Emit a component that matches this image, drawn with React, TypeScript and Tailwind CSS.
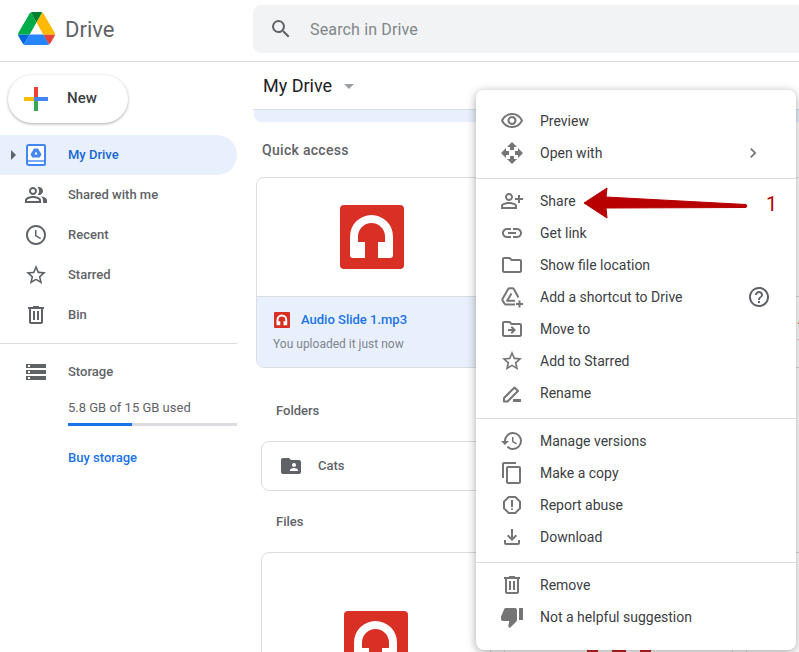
import type { ReactNode } from 'react';
import {
  MdArrowDropDown,
  MdChevronRight,
  MdContentCopy,
  MdFolderShared,
  MdHelpOutline,
  MdLink,
  MdOpenWith,
  MdOutlineAccessTime,
  MdOutlineDriveFileMove,
  MdOutlineFileDownload,
  MdOutlineFolder,
  MdOutlineHistory,
  MdOutlinePeopleAlt,
  MdOutlinePersonAddAlt,
  MdOutlineReportGmailerrorred,
  MdOutlineVisibility,
  MdSearch,
  MdStarBorder,
  MdStorage,
  MdThumbDown,
} from 'react-icons/md';

const DriveLogo = () => (
  <svg width="37" height="33" viewBox="0 0 87.3 78" className="mb-[2px]">
    <path d="m6.6 66.85 3.85 6.65c.8 1.4 1.95 2.5 3.3 3.3l13.75-23.8h-27.5c0 1.55.4 3.1 1.2 4.5z" fill="#0066da" />
    <path d="m43.65 25-13.75-23.8c-1.35.8-2.5 1.9-3.3 3.3l-25.4 44a9.06 9.06 0 0 0 -1.2 4.5h27.5z" fill="#00ac47" />
    <path d="m73.55 76.8c1.35-.8 2.5-1.9 3.3-3.3l1.6-2.75 7.65-13.25c.8-1.4 1.2-2.95 1.2-4.5h-27.502l5.852 11.5z" fill="#ea4335" />
    <path d="m43.65 25 13.75-23.8c-1.35-.8-2.9-1.2-4.5-1.2h-18.5c-1.6 0-3.15.45-4.5 1.2z" fill="#00832d" />
    <path d="m59.8 53h-32.3l-13.75 23.8c1.35.8 2.9 1.2 4.5 1.2h50.8c1.6 0 3.15-.45 4.5-1.2z" fill="#2684fc" />
    <path d="m73.4 26.5-12.7-22c-.8-1.4-1.95-2.5-3.3-3.3l-13.75 23.8 16.15 28h27.45c0-1.55-.4-3.1-1.2-4.5z" fill="#ffba00" />
  </svg>
);

const PlusIcon = () => (
  <svg width="24" height="24" viewBox="0 0 24 24">
    <rect x="10" y="0" width="4" height="10" fill="#ea4335" />
    <rect x="0" y="10" width="10" height="4" fill="#fbbc04" />
    <rect x="14" y="10" width="10" height="4" fill="#4285f4" />
    <rect x="10" y="14" width="4" height="10" fill="#34a853" />
    <rect x="10" y="10" width="4" height="4" fill="#4285f4" />
  </svg>
);

const MyDriveIcon = () => (
  <svg width="24" height="24" viewBox="0 0 24 24" fill="none">
    <path d="M5 2h15a1 1 0 0 1 1 1v18a1 1 0 0 1-1 1H5a2 2 0 0 1-2-2V4a2 2 0 0 1 2-2z" stroke="#4285f4" strokeWidth="2" fill="#fff" />
    <path d="M3.5 18h17" stroke="#4285f4" strokeWidth="1.4" />
    <path d="M10 5.5h4l3.5 6-1.8 3H8.3l-1.8-3z" fill="#4285f4" />
    <path d="M12 8.6l1.6 3h-3.2z" fill="#fff" />
  </svg>
);

const HeadphonesTile = ({ size }: { size: number }) => (
  <svg width={size} height={size} viewBox="0 0 64 64" className="shrink-0">
    <rect width="64" height="64" rx="4" fill="#d93025" />
    <path
      d="M10 31.5A21.5 21.5 0 0 1 53 31.5V50a3 3 0 0 1-3 3H38V37H45V31.5A13.5 13.5 0 0 0 18 31.5V37H25V53H13a3 3 0 0 1-3-3z"
      fill="#fff"
    />
  </svg>
);

const AddShortcutIcon = () => (
  <svg width="24" height="24" viewBox="0 0 24 24" fill="none" stroke="currentColor" strokeWidth="2">
    <path d="M18.5 12.5L13.8 4a1.6 1.6 0 0 0-1.4-.8H9.6a1.6 1.6 0 0 0-1.4.8L2.6 13.8a1.6 1.6 0 0 0 0 1.6l1.8 3.2a1.6 1.6 0 0 0 1.4.8H15" strokeLinejoin="round" />
    <path d="M11.5 8.5L7.2 15.8H15" strokeLinejoin="round" />
    <path d="M19.5 15.5v7M16 19h7" />
  </svg>
);

const RenameIcon = () => (
  <svg width="24" height="24" viewBox="0 0 24 24" fill="none" stroke="currentColor" strokeWidth="2">
    <path d="M4 20.5v-3.5L14.5 6.5 18 10 7.5 20.5z" strokeLinejoin="round" />
    <rect x="13" y="18" width="8" height="3" fill="currentColor" stroke="none" />
  </svg>
);

const BinIcon = () => (
  <svg width="24" height="24" viewBox="0 0 24 24" fill="currentColor">
    <path d="M15 4V3H9v1H4v2h1v13c0 1.1.9 2 2 2h10c1.1 0 2-.9 2-2V6h1V4h-5zm2 15H7V6h10v13zM9 8h2v9H9zm4 0h2v9h-2z" />
  </svg>
);

const SideItem = ({ icon, label, active }: { icon: ReactNode; label: string; active?: boolean }) => (
  <div
    className={
      active
        ? 'relative flex h-10 w-[237px] items-center rounded-r-full bg-[#e8f0fe] pl-6 text-[#1967d2]'
        : 'flex h-10 w-[237px] items-center pl-6 text-[#5f6368]'
    }
  >
    <span className="flex w-11 shrink-0 items-center">{icon}</span>
    <span className="text-[13px] font-medium">{label}</span>
  </div>
);

const MenuItem = ({ icon, label, right }: { icon: ReactNode; label: string; right?: ReactNode }) => (
  <div className="flex h-8 items-center pl-6 pr-6 text-sm text-[#3c4043]">
    <span className="mr-4 flex w-6 shrink-0 justify-center text-[#757575]">{icon}</span>
    <span className="flex-1">{label}</span>
    {right}
  </div>
);

const MenuDivider = () => <div className="mb-[6px] mt-[9px] h-px bg-[#dadce0]" />;

const QuickCard = ({ title, sub, tile }: { title: string; sub: string; tile: boolean }) => (
  <div className="flex h-[191px] w-[232px] shrink-0 flex-col overflow-hidden rounded-lg border border-[#dadce0] bg-white">
    <div className="flex h-[119px] shrink-0 items-center justify-center border-b border-[#dadce0]">
      {tile && <HeadphonesTile size={64} />}
    </div>
    <div className={tile ? 'flex-1 bg-[#e8f0fe] px-4 pt-[15px]' : 'flex-1 px-4 pt-[15px]'}>
      <div className="flex h-4 items-center gap-[11px] pl-px">
        <HeadphonesTile size={16} />
        <span className={tile ? 'text-[13px] font-medium text-[#1a73e8]' : 'ml-[17px] text-[13px] font-medium text-[#3c4043]'}>
          {title}
        </span>
      </div>
      <div className={tile ? 'mt-2 text-xs text-[#80868b]' : 'ml-[45px] mt-2 whitespace-nowrap text-xs text-[#80868b]'}>{sub}</div>
    </div>
  </div>
);

const App = () => {
  return (
    <div className="relative h-[652px] w-[799px] overflow-hidden bg-white [font-family:Roboto,sans-serif]">
      {/* Top bar */}
      <header className="flex h-[62px] items-center border-b border-[#dadce0]">
        <div className="flex w-[253px] shrink-0 items-center pb-[2px] pl-[18px]">
          <DriveLogo />
          <span className="ml-[10px] text-[22px] text-[#5f6368]">Drive</span>
        </div>
        <div className="mb-[3px] flex h-12 flex-1 items-center rounded-l-lg bg-[#f1f3f4] pl-4">
          <MdSearch size={24} className="text-[#5f6368]" />
          <span className="ml-[17px] pt-[2px] text-base tracking-[0.15px] text-[#80868b]">Search in Drive</span>
        </div>
      </header>

      <div className="flex">
        {/* Sidebar */}
        <aside className="w-[253px] shrink-0 pt-[13px]">
          <div className="ml-2 flex h-12 w-[120px] items-center rounded-full bg-white pl-4 shadow-[0_1px_3px_rgba(60,64,67,0.45)]">
            <PlusIcon />
            <span className="mb-[2px] ml-[19px] text-[15px] font-medium text-[#3c4043]">New</span>
          </div>
          <div className="mt-3">
            <div className="relative">
              <span className="absolute left-[11px] top-[15px] z-10 h-0 w-0 border-y-[5px] border-l-[5px] border-y-transparent border-l-[#5f6368]" />
              <SideItem active icon={<MyDriveIcon />} label="My Drive" />
            </div>
            <SideItem icon={<MdOutlinePeopleAlt size={24} />} label="Shared with me" />
            <SideItem icon={<MdOutlineAccessTime size={24} />} label="Recent" />
            <SideItem icon={<MdStarBorder size={24} />} label="Starred" />
            <SideItem icon={<BinIcon />} label="Bin" />
          </div>
          <div className="mt-2 h-px w-[237px] bg-[#dadce0]" />
          <div className="mt-2">
            <SideItem icon={<MdStorage size={24} />} label="Storage" />
          </div>
          <div className="ml-[68px] mt-[7px] w-[169px]">
            <div className="text-[13px] leading-[18px] text-[#5f6368]">5.8 GB of 15 GB used</div>
            <div className="mt-[6px] h-[3px] bg-[#dadce0]">
              <div className="h-full w-[64px] bg-[#1a73e8]" />
            </div>
            <div className="mt-[22px] text-[13px] font-medium text-[#1a73e8]">Buy storage</div>
          </div>
        </aside>

        {/* Main area */}
        <main className="min-w-0 flex-1 overflow-hidden">
          <div className="flex h-[48px] items-center border-b border-[#dadce0] pl-[10px]">
            <span className="text-lg text-[#202124]">My Drive</span>
            <MdArrowDropDown size={24} className="ml-[5px] text-[#9aa0a6]" />
          </div>
          <div className="ml-px h-3 rounded-bl-lg bg-[#e8f0fe]" />
          <div className="ml-[9px] mt-[19px] text-sm font-medium leading-[18px] tracking-[0.3px] text-[#5f6368]">Quick access</div>
          <div className="ml-[3px] mt-[18px] flex gap-2">
            <QuickCard tile title="Audio Slide 1.mp3" sub="You uploaded it just now" />
            <QuickCard tile={false} title="" sub="" />
            <QuickCard tile={false} title="Audio" sub="You" />
          </div>
          <div className="ml-[23px] mt-[34px] text-[13px] font-medium leading-[18px] text-[#5f6368]">Folders</div>
          <div className="ml-2 mt-[21px] flex h-[50px] w-[230px] items-center rounded-lg border border-[#dadce0] pl-[17px]">
            <MdFolderShared size={24} className="text-[#5f6368]" />
            <span className="ml-[15px] text-[13px] font-medium text-[#5f6368]">Cats</span>
          </div>
          <div className="ml-[23px] mt-[22px] text-[13px] font-medium leading-[18px] text-[#5f6368]">Files</div>
          <div className="ml-2 mt-[21px] flex gap-[13px]">
            <div className="flex h-[200px] w-[230px] shrink-0 justify-center rounded-lg border border-[#dadce0] pt-[58px]">
              <HeadphonesTile size={64} />
            </div>
            <div className="flex h-[200px] w-[229px] shrink-0 gap-[14px] rounded-lg border border-[#dadce0] pl-[82px] pt-[95px]">
              <div className="h-4 w-[11px] bg-[#c5221f]" />
              <div className="h-4 w-[14px] bg-[#c5221f]" />
              <div className="h-4 w-[11px] bg-[#c5221f]" />
            </div>
            <div className="h-[200px] w-[228px] shrink-0 rounded-lg border border-[#dadce0]" />
          </div>
        </main>
      </div>

      {/* Context menu */}
      <div className="absolute left-[476px] top-[90px] h-[560px] w-[320px] rounded-lg bg-white pt-[15px] shadow-[0_2px_10px_rgba(0,0,0,0.35)]">
        <MenuItem icon={<MdOutlineVisibility size={24} />} label="Preview" />
        <MenuItem
          icon={<MdOpenWith size={24} />}
          label="Open with"
          right={<MdChevronRight size={20} className="mr-[9px] text-[#757575]" />}
        />
        <MenuDivider />
        <MenuItem icon={<MdOutlinePersonAddAlt size={24} />} label="Share" />
        <MenuItem icon={<MdLink size={24} />} label="Get link" />
        <MenuItem icon={<MdOutlineFolder size={24} />} label="Show file location" />
        <MenuItem
          icon={<AddShortcutIcon />}
          label="Add a shortcut to Drive"
          right={<MdHelpOutline size={24} className="mr-px text-[#5f6368]" />}
        />
        <MenuItem icon={<MdOutlineDriveFileMove size={24} />} label="Move to" />
        <MenuItem icon={<MdStarBorder size={24} />} label="Add to Starred" />
        <MenuItem icon={<RenameIcon />} label="Rename" />
        <MenuDivider />
        <MenuItem icon={<MdOutlineHistory size={24} />} label="Manage versions" />
        <MenuItem icon={<MdContentCopy size={24} />} label="Make a copy" />
        <MenuItem icon={<MdOutlineReportGmailerrorred size={24} />} label="Report abuse" />
        <MenuItem icon={<MdOutlineFileDownload size={24} />} label="Download" />
        <MenuDivider />
        <MenuItem icon={<BinIcon />} label="Remove" />
        <MenuItem icon={<MdThumbDown size={24} />} label="Not a helpful suggestion" />
      </div>

      {/* Annotation arrow */}
      <svg className="absolute left-[580px] top-[184px]" width="172" height="38" viewBox="0 0 172 38">
        <path d="M4 19L27 4L26 13L166 20.5Q168 22 166 23.5L26 24L27 34z" fill="#b80000" stroke="#b80000" strokeWidth="1" strokeLinejoin="round" />
      </svg>
      <span className="absolute left-[766px] top-[192px] text-xl leading-6 text-[#b80000]">1</span>
    </div>
  );
};

export default App;
